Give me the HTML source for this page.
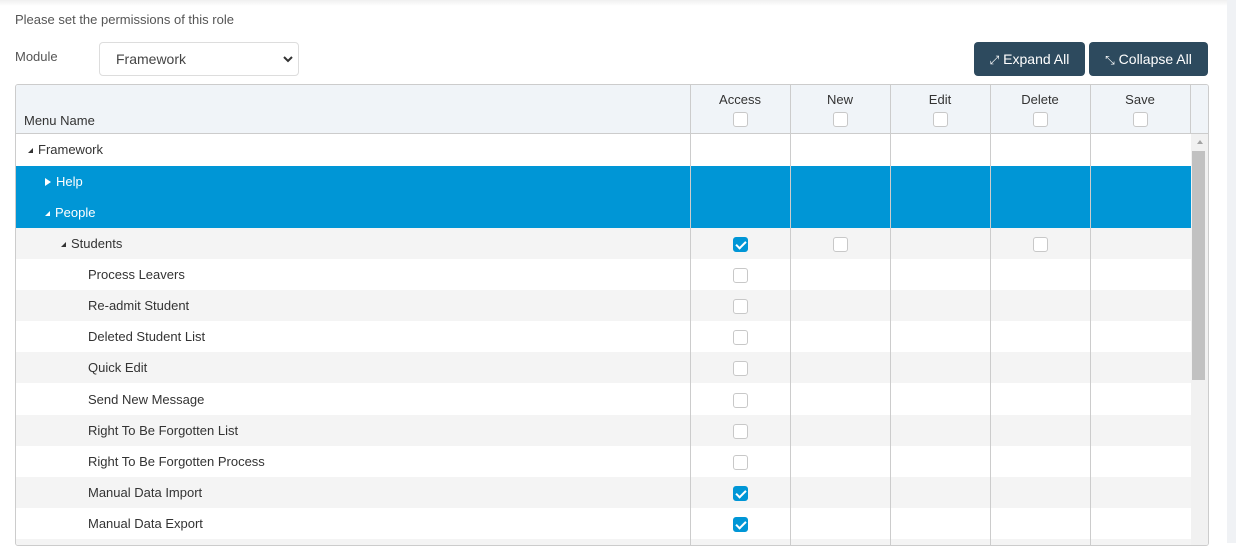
<!DOCTYPE html>
<html><head><style>
*{box-sizing:border-box;margin:0;padding:0}
body{width:1236px;height:543px;overflow:hidden;background:#fff;font-family:"Liberation Sans",sans-serif;font-size:13px;color:#333;position:relative}
.a{position:absolute}
.strip{left:1227px;top:0;width:9px;height:543px;background:#f0f2f5}
.shadow{left:0;top:0;width:1227px;height:6px;background:linear-gradient(#f0f0f0,#fff)}
.btn{top:42px;height:34px;background:#2d4a5e;color:#fff;border-radius:4px;font-size:14px;line-height:34px;text-align:center}
.tbl{left:15px;top:84px;width:1194px;height:462px;border:1px solid #ccc;border-radius:3px;overflow:hidden}
.hdr{left:0;top:0;width:1192px;height:49px;background:#f0f4f8;border-bottom:1px solid #ccc}
.col{position:absolute;top:0;width:1px;background:#ccc}
.hl{position:absolute;top:7px;width:100px;text-align:center;color:#333}
.cb{position:absolute;width:15px;height:15px;border:1px solid #c8c8c8;border-radius:3px;background:#fff}
.cb.on{background:#0096d6;border-color:#0096d6}
.cb.on:after{content:"";position:absolute;left:4px;top:1px;width:4px;height:8px;border:solid #fff;border-width:0 2px 2px 0;transform:rotate(45deg)}
.row{position:absolute;left:0;width:1175px;height:31px;line-height:32px}
.tri{display:inline-block;width:5px;height:5px;margin-right:5px;vertical-align:1px}
.rt{display:inline-block;width:0;height:0;border-top:4px solid transparent;border-bottom:4px solid transparent;border-left:6px solid #fff;margin-right:5px;vertical-align:0}
</style></head><body>
<div class="a shadow"></div>
<div class="a strip"></div>
<div class="a" style="left:15px;top:12px;color:#555">Please set the permissions of this role</div>
<div class="a" style="left:15px;top:49px;color:#555">Module</div>
<div class="a" style="left:99px;top:42px;width:200px;height:34px;border:1px solid #ddd;border-radius:4px;padding-left:16px;line-height:32px;font-size:14px;color:#444">Framework
<svg class="a" style="left:183px;top:13px" width="10" height="7" viewBox="0 0 10 7"><path d="M1 1l4 4 4-4" stroke="#333" stroke-width="2" fill="none"/></svg></div>
<div class="a btn" style="left:974px;width:111px"><span style="font-size:12px">⤢</span> Expand All</div>
<div class="a btn" style="left:1089px;width:119px"><span style="font-size:12px">⤡</span> Collapse All</div>
<div class="a tbl">
 <div class="a hdr"></div>
 <div class="a" style="left:8px;top:28px">Menu Name</div>
 <div class="a" style="left:0;top:49px;width:1175px;height:420px">
  <div class="row" style="top:0;height:32px;background:#fff;padding-left:12px"><svg class="tri" viewBox="0 0 5 5"><path d="M5 0V5H0z" fill="#333"/></svg>Framework</div>
  <div class="row" style="top:32px;background:#0096d6;color:#fff;padding-left:29px"><span class="rt"></span>Help</div>
  <div class="row" style="top:63px;background:#0096d6;color:#fff;padding-left:29px"><svg class="tri" viewBox="0 0 5 5"><path d="M5 0V5H0z" fill="#fff"/></svg>People</div>
  <div class="row" style="top:94px;background:#f4f4f4;padding-left:45px"><svg class="tri" viewBox="0 0 5 5"><path d="M5 0V5H0z" fill="#333"/></svg>Students</div>
  <div class="row" style="top:125px;background:#fff;padding-left:72px">Process Leavers</div>
  <div class="row" style="top:156px;background:#f4f4f4;padding-left:72px">Re-admit Student</div>
  <div class="row" style="top:187px;background:#fff;padding-left:72px">Deleted Student List</div>
  <div class="row" style="top:218px;background:#f4f4f4;padding-left:72px">Quick Edit</div>
  <div class="row" style="top:250px;background:#fff;padding-left:72px">Send New Message</div>
  <div class="row" style="top:281px;background:#f4f4f4;padding-left:72px">Right To Be Forgotten List</div>
  <div class="row" style="top:312px;background:#fff;padding-left:72px">Right To Be Forgotten Process</div>
  <div class="row" style="top:343px;background:#f4f4f4;padding-left:72px">Manual Data Import</div>
  <div class="row" style="top:374px;background:#fff;padding-left:72px">Manual Data Export</div>
  <div class="row" style="top:405px;background:#f4f4f4"></div>
 </div>
 <div class="col" style="left:674px;height:462px"></div>
 <div class="col" style="left:774px;height:462px"></div>
 <div class="col" style="left:874px;height:462px"></div>
 <div class="col" style="left:974px;height:462px"></div>
 <div class="col" style="left:1074px;height:462px"></div>
 <div class="col" style="left:1174px;height:49px"></div>
 <div class="hl" style="left:674px">Access</div>
 <div class="hl" style="left:774px">New</div>
 <div class="hl" style="left:874px">Edit</div>
 <div class="hl" style="left:974px">Delete</div>
 <div class="hl" style="left:1074px">Save</div>
 <div class="cb" style="left:717px;top:27px"></div>
 <div class="cb" style="left:817px;top:27px"></div>
 <div class="cb" style="left:917px;top:27px"></div>
 <div class="cb" style="left:1017px;top:27px"></div>
 <div class="cb" style="left:1117px;top:27px"></div>
 <div class="cb on" style="left:717px;top:152px"></div>
 <div class="cb" style="left:817px;top:152px"></div>
 <div class="cb" style="left:1017px;top:152px"></div>
 <div class="cb" style="left:717px;top:183px"></div>
 <div class="cb" style="left:717px;top:214px"></div>
 <div class="cb" style="left:717px;top:245px"></div>
 <div class="cb" style="left:717px;top:276px"></div>
 <div class="cb" style="left:717px;top:308px"></div>
 <div class="cb" style="left:717px;top:339px"></div>
 <div class="cb" style="left:717px;top:370px"></div>
 <div class="cb on" style="left:717px;top:401px"></div>
 <div class="cb on" style="left:717px;top:432px"></div>
 <div class="a" style="left:1175px;top:49px;width:17px;height:413px;background:#f1f1f1"></div>
 <div class="a" style="left:1181px;top:55px;width:0;height:0;border-left:3px solid transparent;border-right:3px solid transparent;border-bottom:4px solid #a3a3a3"></div>
 <div class="a" style="left:1176px;top:66px;width:13px;height:229px;background:#c1c1c1"></div>
</div>
</body></html>
